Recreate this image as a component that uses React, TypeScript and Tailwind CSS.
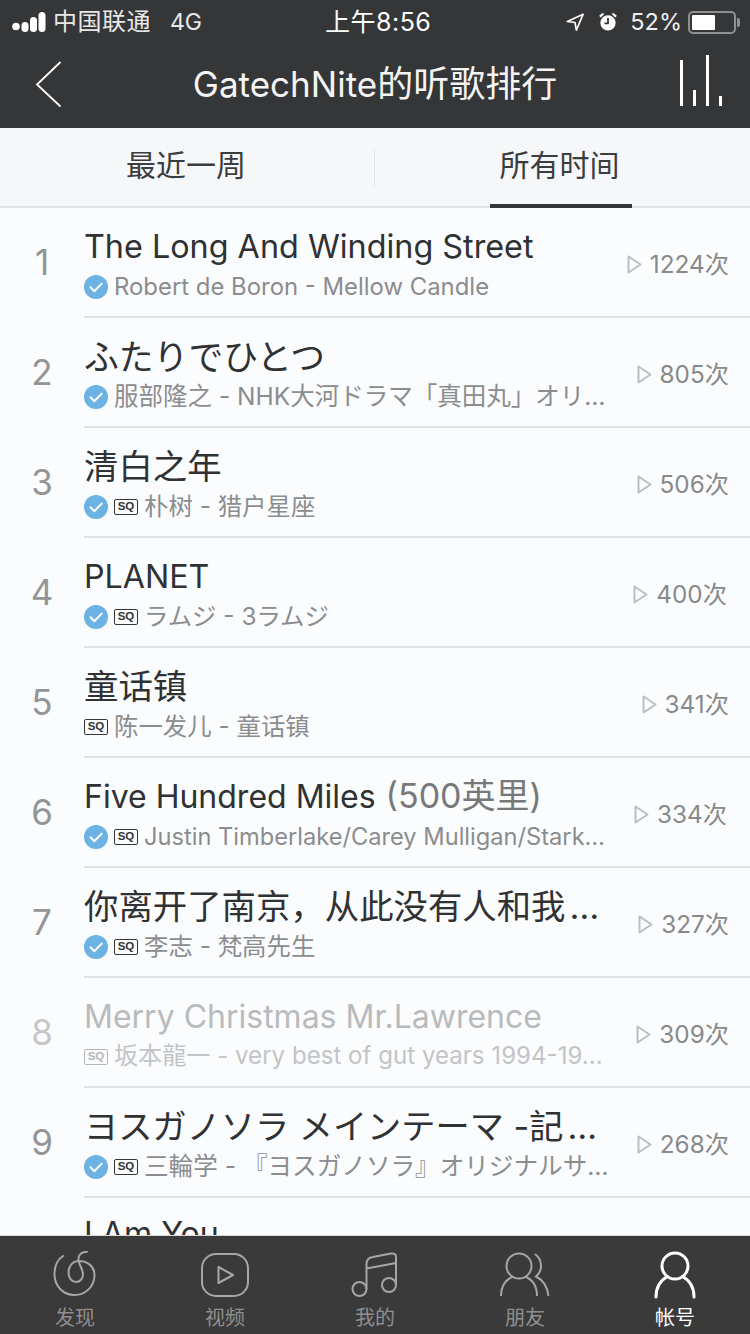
import React from "react";

function Check() {
  return (
    <svg width="24" height="24" viewBox="0 0 24 24" className="shrink-0 mr-[6px]">
      <circle cx="12" cy="12" r="12" fill="#6cb2e4" />
      <path d="M6.5 12.2l3.8 4 7.4-7.6" fill="none" stroke="#fff" strokeWidth="2" strokeLinecap="round" strokeLinejoin="round" />
    </svg>
  );
}

function SQ({ faded }: { faded?: boolean }) {
  return (
    <span
      className={`shrink-0 mr-[6px] w-[24px] h-[16px] border-[1.5px] rounded-[2px] flex items-center justify-center text-[11.5px] leading-none font-bold font-['Liberation_Sans'] ${
        faded ? "border-[#b5b6b8] text-[#b5b6b8]" : "border-[#333537] text-[#333537]"
      }`}
    >
      SQ
    </span>
  );
}

type Row = {
  n: number;
  title: string;
  titleSize: string;
  titleExtra?: string;
  ell?: boolean;
  sub: string;
  subSize: string;
  count: string;
  check: boolean;
  sq: boolean;
  faded?: boolean;
  pr: string;
};

const rows: Row[] = [
  { n: 1, title: "The Long And Winding Street", titleSize: "text-[32.35px]", sub: "Robert de Boron - Mellow Candle", subSize: "text-[23.9px]", count: "1224次", check: true, sq: false, pr: "pr-[21px]" },
  { n: 2, title: "ふたりでひとつ", titleSize: "text-[34.8px]", sub: "服部隆之 - NHK大河ドラマ「真田丸」オリ…", subSize: "text-[24.5px]", count: "805次", check: true, sq: false, pr: "pr-[21px]" },
  { n: 3, title: "清白之年", titleSize: "text-[34.4px]", sub: "朴树 - 猎户星座", subSize: "text-[24.4px]", count: "506次", check: true, sq: true, pr: "pr-[21px]" },
  { n: 4, title: "PLANET", titleSize: "text-[32.2px]", sub: "ラムジ - 3ラムジ", subSize: "text-[24.4px]", count: "400次", check: true, sq: true, pr: "pr-[23px]" },
  { n: 5, title: "童话镇", titleSize: "text-[34.4px]", sub: "陈一发儿 - 童话镇", subSize: "text-[24.4px]", count: "341次", check: false, sq: true, pr: "pr-[21px]" },
  { n: 6, title: "Five Hundred Miles", titleSize: "text-[32px]", titleExtra: "(500英里)", sub: "Justin Timberlake/Carey Mulligan/Stark…", subSize: "text-[23.65px]", count: "334次", check: true, sq: true, pr: "pr-[23px]" },
  { n: 7, title: "你离开了南京，从此没有人和我", ell: true, titleSize: "text-[34.4px]", sub: "李志 - 梵高先生", subSize: "text-[24.4px]", count: "327次", check: true, sq: true, pr: "pr-[21px]" },
  { n: 8, title: "Merry Christmas Mr.Lawrence", titleSize: "text-[32px]", sub: "坂本龍一 - very best of gut years 1994-19…", subSize: "text-[24.1px]", count: "309次", check: false, sq: true, faded: true, pr: "pr-[21px]" },
  { n: 9, title: "ヨスガノソラ メインテーマ -記", ell: true, titleSize: "text-[34.2px]", sub: "三輪学 - 『ヨスガノソラ』オリジナルサ…", subSize: "text-[24.6px]", count: "268次", check: true, sq: true, pr: "pr-[21px]" },
];

function SongRow({ r }: { r: Row }) {
  return (
    <div className="flex h-[110px] shrink-0">
      <div className={`w-[84px] shrink-0 flex items-center justify-center pb-[2px] text-[35px] ${r.faded ? "text-[#c6c7c9]" : "text-[#939496]"}`}>
        {r.n}
      </div>
      <div className={`flex-1 min-w-0 flex items-center border-b-2 border-[#e2e3e5] ${r.pr}`}>
        <div className="flex-1 min-w-0 mt-[4px]">
          <div className={`whitespace-nowrap leading-[44px] ${r.titleSize} ${r.faded ? "text-[#b9babc]" : "text-[#2f3133]"}`}>
            {r.title}
            {r.ell && <span className="ml-[4px]">…</span>}
            {r.titleExtra && <span className="text-[34px] ml-[10px] text-[#77787a]">{r.titleExtra}</span>}
          </div>
          <div className="flex items-center h-[34px] mt-[1px]">
            {r.check && <Check />}
            {r.sq && <SQ faded={r.faded} />}
            <span className={`whitespace-nowrap ${r.subSize} ${r.faded ? "text-[#c3c4c6]" : "text-[#8b8c8e]"}`}>{r.sub}</span>
          </div>
        </div>
        <div className="flex items-center shrink-0 mt-[4px] text-[24.3px] text-[#88898b]">
          <svg width="15" height="19" viewBox="0 0 15 19" className="mr-[8px]">
            <path d="M1.5 1.5L13.5 9.5L1.5 17.5Z" fill="none" stroke="#bcbdbf" strokeWidth="2" strokeLinejoin="round" />
          </svg>
          {r.count}
        </div>
      </div>
    </div>
  );
}

function Tab({ label, icon, active }: { label: string; icon: React.ReactNode; active?: boolean }) {
  return (
    <div className="flex-1 flex flex-col items-center pt-[14px]">
      <div className="h-[50px] flex items-center justify-center">{icon}</div>
      <div className={`text-[20px] leading-[28px] mt-[4px] ${active ? "text-white" : "text-[#8f8f8f]"}`}>{label}</div>
    </div>
  );
}

const stroke = "#a6a6a6";

export default function App() {
  return (
    <div
      className="w-[750px] h-[1334px] overflow-hidden flex flex-col bg-[#fbfcfe]"
      style={{ fontFamily: 'Inter, "Noto Sans CJK SC", "Noto Sans CJK JP", sans-serif' }}
    >
      {/* header */}
      <div className="h-[128px] shrink-0 bg-[#353638] text-white flex flex-col">
        <div className="h-[44px] flex items-center pl-[12px] text-[24px] relative">
          <svg width="34" height="20" viewBox="0 0 34 20" className="mr-[7px]">
            <circle cx="4" cy="14.5" r="3.8" fill="#fff" />
            <rect x="9.5" y="10" width="7" height="10" rx="3.5" fill="#fff" />
            <rect x="18" y="5" width="7" height="15" rx="3.5" fill="#fff" />
            <rect x="26.5" y="0" width="7" height="20" rx="3.5" fill="#fff" />
          </svg>
          <span className="text-[#e8e8e8] tracking-[0.5px]">中国联通</span>
          <span className="ml-[19px] text-[23px] text-[#e8e8e8]">4G</span>
          <span className="absolute left-[325px] top-[4px] text-[25px] tracking-[0.5px]">上午8:56</span>
          <div className="ml-auto flex items-center pr-[10px]">
            <svg width="18" height="18" viewBox="0 0 20 20" className="mr-[15px]">
              <path d="M19 1.5L1.5 9.5l8.5 1 1.5 8.5z" fill="none" stroke="#fff" strokeWidth="1.8" strokeLinejoin="round" />
            </svg>
            <svg width="18" height="20" viewBox="0 0 20 22" className="mr-[13px]">
              <circle cx="10" cy="12" r="8.5" fill="#fff" />
              <path d="M10 6.5V12.5H6" fill="none" stroke="#353638" strokeWidth="2" />
              <path d="M1 5L5 1.5M19 5L15 1.5" stroke="#fff" strokeWidth="2.4" />
            </svg>
            <span className="text-[23.5px] text-[#eeeeee] mr-[6px]">52%</span>
            <div className="w-[48px] h-[23px] border-2 border-[#8f9092] rounded-[5px] p-[2px]">
              <div className="w-[23px] h-full bg-white rounded-[1px]" />
            </div>
            <div className="w-[3px] h-[9px] bg-[#8f9092] rounded-r-[2px] ml-[1px]" />
          </div>
        </div>
        <div className="flex-1 flex items-center relative">
          <svg width="28" height="48" viewBox="0 0 28 48" className="ml-[35px] mt-[-4px]">
            <path d="M25.5 2L2 24.5L25.5 46.5" fill="none" stroke="#fff" strokeWidth="1.8" />
          </svg>
          <div className="absolute left-0 right-0 top-[17px] text-center text-[36px] leading-[46px] text-[#f4f4f4]">
            <span className="text-[35px]">GatechNite</span>的听歌排行
          </div>
          <svg width="44" height="51" viewBox="0 0 44 51" className="ml-auto mr-[27px] mt-[-11px]">
            <rect x="1" y="5" width="3" height="46" fill="#fff" />
            <rect x="14" y="35" width="3" height="16" fill="#fff" />
            <rect x="27" y="0" width="3" height="51" fill="#fff" />
            <rect x="40" y="41" width="3" height="10" fill="#fff" />
          </svg>
        </div>
      </div>

      {/* tabs */}
      <div className="h-[80px] shrink-0 bg-[#f6f7f9] border-b-2 border-[#e3e4e6] flex">
        <div className="flex-1 flex items-center justify-center relative">
          <span className="text-[30px] text-[#3c3d3f] mt-[-4px] mr-[3px]">最近一周</span>
          <span className="absolute right-0 top-[22px] h-[36px] w-[1px] bg-[#e2e3e5]" />
        </div>
        <div className="flex-1 flex items-center justify-center relative">
          <span className="text-[30px] text-[#3c3d3f] mt-[-4px] mr-[6px]">所有时间</span>
          <span className="absolute left-[115px] w-[142px] bottom-[-2px] h-[4px] bg-[#353638]" />
        </div>
      </div>

      {/* list */}
      <div className="flex-1 min-h-0 overflow-hidden flex flex-col">
        {rows.map((r) => (
          <SongRow key={r.n} r={r} />
        ))}
        <div className="pl-[84px] text-[32.2px] leading-[44px] text-[#2f3133] pt-[14px]">I Am You</div>
      </div>

      {/* tab bar */}
      <div className="h-[99px] shrink-0 bg-[#3a3a3b] border-t border-[#d8d8da] flex relative z-10">
        <Tab
          label="发现"
          icon={
            <svg width="44" height="48" viewBox="0 0 44 48" fill="none" stroke={stroke} strokeWidth="2">
              <path d="M10 5C4 9 1.5 15 1.5 23C1.5 35 10 44 21.5 44C33 44 41.5 35 41.5 24C41.5 15 34 10 26 10C19 10 15.5 16 15.5 21.5C15.5 27 19 31 23 31C27 31 30 27.5 30 23.5C30 18 26 14 25.5 9C25 4 28 1 34 0.8" strokeLinecap="round" />
            </svg>
          }
        />
        <Tab
          label="视频"
          icon={
            <svg width="48" height="44" viewBox="0 0 48 44" fill="none" stroke={stroke} strokeWidth="2">
              <rect x="1" y="1" width="46" height="42" rx="14" />
              <path d="M17.5 14L32 22L17.5 30Z" strokeLinejoin="round" />
            </svg>
          }
        />
        <Tab
          label="我的"
          icon={
            <svg width="48" height="46" viewBox="0 0 48 46" fill="none" stroke={stroke} strokeWidth="2">
              <circle cx="8.5" cy="37" r="7" />
              <circle cx="38" cy="33" r="7" />
              <path d="M15.5 37V12C15.5 7.5 18 5.5 22 5L40 1.5C43.5 1 45 2.5 45 5V33M15.5 16.5L45 11" />
            </svg>
          }
        />
        <Tab
          label="朋友"
          icon={
            <svg width="50" height="46" viewBox="0 0 50 46" fill="none" stroke={stroke} strokeWidth="2">
              <circle cx="19" cy="14" r="12.5" />
              <path d="M1 44C1 33 7 27 13 24.5M25 24.5C31 27 37 33 37 44" />
              <path d="M35 2C39 5 41 9 41 14C41 19 39 22 36 24.5C43 28 47.5 35 48.5 44" />
            </svg>
          }
        />
        <Tab
          active
          label="帐号"
          icon={
            <svg width="42" height="48" viewBox="0 0 42 48" fill="none" stroke="#fff" strokeWidth="3">
              <circle cx="21" cy="15" r="13" />
              <path d="M2 46C2 36 7 29 13.5 25.5M28.5 25.5C35 29 40 36 40 46" strokeLinecap="round" />
            </svg>
          }
        />
      </div>
    </div>
  );
}
